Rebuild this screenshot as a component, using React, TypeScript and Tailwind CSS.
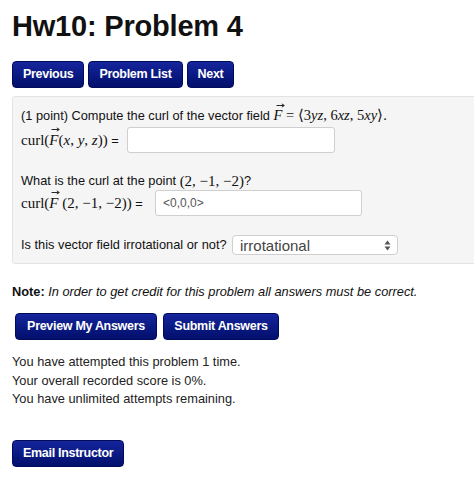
import React from 'react';

const sans = { fontFamily: '"Liberation Sans", Arial, sans-serif' };
const serif = { fontFamily: '"Liberation Serif", "Times New Roman", serif' };

const NavButton: React.FC<{ label: string; className?: string }> = ({ label, className = '' }) => (
  <button
    className={`h-[27px] px-[10px] rounded-[4px] border border-[#020b5a] bg-gradient-to-b from-[#15259c] to-[#030f6c] text-white font-bold text-[12.5px] tracking-[-0.3px] leading-none whitespace-nowrap ${className}`}
    style={sans}
  >
    {label}
  </button>
);

// F with the little vector arrow on top
const VecF: React.FC = () => (
  <span className="relative inline-block italic">
    F
    <svg className="absolute left-[2px] top-[-2px]" width="9" height="5" viewBox="0 0 9 5">
      <path d="M0.5 2.5 H7.8 M5.8 0.9 L8.3 2.5 L5.8 4.1" stroke="#111" strokeWidth="0.9" fill="none" />
    </svg>
  </span>
);

const App: React.FC = () => {
  return (
    <div className="w-[474px] h-[479px] bg-white text-[#111] overflow-hidden" style={sans}>
      <div className="pl-[12px]">
        <h1 className="mt-[10px] text-[29px] leading-[32px] font-bold tracking-[-0.2px]">Hw10: Problem 4</h1>

        <div className="mt-[19px] flex gap-[4px]">
          <NavButton label="Previous" />
          <NavButton label="Problem List" />
          <NavButton label="Next" />
        </div>

        <div className="mt-[8px] w-[480px] bg-[#f5f5f5] border border-[#e3e3e3] rounded-l-[3px] pl-[8px] pt-[10px] pb-[8px] text-[12.8px]">
          <div className="h-[18px] flex items-center whitespace-nowrap">
            <span>(1 point) Compute the curl of the vector field&nbsp;</span>
            <span className="text-[14.5px]" style={serif}>
              <VecF /> = ⟨3<i>yz</i>, 6<i>xz</i>, 5<i>xy</i>⟩.
            </span>
          </div>
          <div className="mt-[2px] h-[26px] flex items-center">
            <span className="text-[15px] w-[106px] whitespace-nowrap" style={serif}>
              curl(<VecF />(<i>x</i>, <i>y</i>, <i>z</i>))
              <span className="text-[12.8px]" style={sans}> =</span>
            </span>
            <div className="w-[208px] h-[26px] bg-white border border-[#cfcfcf] rounded-[3px]" />
          </div>

          <div className="mt-[19px] h-[18px] flex items-center whitespace-nowrap">
            <span>What is the curl at the point&nbsp;</span>
            <span className="text-[15px]" style={serif}>(2, −1, −2)</span>
            <span>?</span>
          </div>
          <div className="h-[26px] flex items-center">
            <span className="text-[15px] w-[134px] whitespace-nowrap" style={serif}>
              curl(<VecF /> (2, −1, −2))
              <span className="text-[12.8px]" style={sans}> =</span>
            </span>
            <div className="w-[207px] h-[26px] bg-white border border-[#cfcfcf] rounded-[3px] flex items-center pl-[7px] text-[12px] text-[#555]">
              &lt;0,0,0&gt;
            </div>
          </div>

          <div className="mt-[19px] h-[20px] flex items-center whitespace-nowrap">
            <span className="w-[211px]">Is this vector field irrotational or not?</span>
            <div className="w-[166px] h-[20px] bg-white border border-[#cfcfcf] rounded-[4px] flex items-center justify-between pl-[7px] pr-[6px]">
              <span className="text-[15px] text-[#444] leading-none">irrotational</span>
              <svg width="7" height="11" viewBox="0 0 7 11">
                <path d="M3.5 0.5 L6.5 4.5 L0.5 4.5 Z" fill="#555" />
                <path d="M3.5 10.5 L6.5 6.5 L0.5 6.5 Z" fill="#555" />
              </svg>
            </div>
          </div>
        </div>

        <p className="mt-[19px] h-[18px] leading-[18px] text-[12.8px]">
          <b>Note:</b> <i>In order to get credit for this problem all answers must be correct.</i>
        </p>

        <div className="mt-[12px] pl-[3px] flex gap-[6px]">
          <NavButton label="Preview My Answers" className="w-[142px]" />
          <NavButton label="Submit Answers" className="w-[116px]" />
        </div>

        <div className="mt-[13px] text-[12.8px] leading-[18.5px] text-[#222]">
          <div>You have attempted this problem 1 time.</div>
          <div>Your overall recorded score is 0%.</div>
          <div>You have unlimited attempts remaining.</div>
        </div>

        <div className="mt-[31px]">
          <NavButton label="Email Instructor" className="w-[112px]" />
        </div>
      </div>
    </div>
  );
};

export default App;
